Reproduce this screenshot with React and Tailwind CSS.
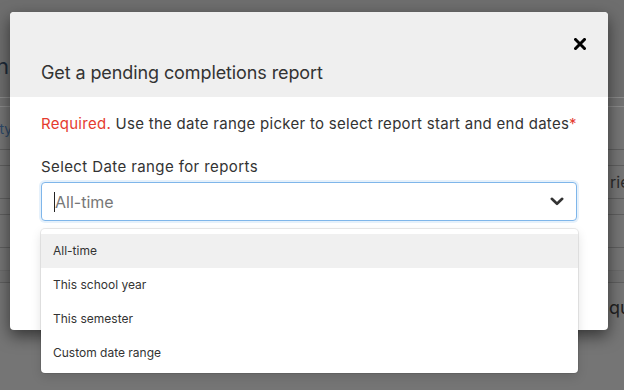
import React from "react";

const font = { fontFamily: "Inter, 'Noto Sans', sans-serif" };

function Background() {
  return (
    <div className="flex h-full w-full flex-col bg-[#757575]" style={font}>
      <div className="flex h-[97px] items-end bg-[#6e6e6e] pb-[20px]">
        <span className="-ml-[4px] text-[22px] leading-none text-[#1d2a38]">n</span>
      </div>
      <div className="h-[10px] border-y border-[#8a8a8a] bg-[#727272]" />
      <div className="flex h-[43px] items-center border-b border-[#5f5f5f]">
        <span className="-ml-[4px] text-[14px] text-[#2f4a6a]">ity</span>
      </div>
      <div className="h-[16px] border-b border-[#5f5f5f]" />
      <div className="flex h-[33px] items-center border-b border-[#5f5f5f] pl-[610px]">
        <span className="whitespace-nowrap text-[16px] text-[#2a2a2a]">ries</span>
      </div>
      <div className="h-[16px] border-b border-[#5f5f5f]" />
      <div className="h-[33px] border-b border-[#5f5f5f]" />
      <div className="h-[23px] border-b border-[#6a6a6a]" />
      <div className="h-[12px] border-b border-[#5f5f5f] bg-[#717171]" />
      <div className="flex h-[50px] items-start pl-[609px] pt-[16px]">
        <span className="whitespace-nowrap text-[18px] leading-none text-[#222]">quick</span>
      </div>
    </div>
  );
}

export default function App() {
  const items = ["All-time", "This school year", "This semester", "Custom date range"];
  return (
    <div className="relative h-[390px] w-[624px] overflow-hidden" style={font}>
      <Background />
      <div className="absolute left-[10px] top-[12px] h-[318px] w-[598px] rounded-[4px] bg-white shadow-[0_6px_16px_rgba(0,0,0,0.55)]">
        <div className="relative h-[85px] rounded-t-[4px] bg-[#efefef] px-[31px] pt-[49px]">
          <h2 className="text-[18px] leading-[24px] tracking-[-0.1px] text-[#333]">
            Get a pending completions report
          </h2>
          <button className="absolute right-[21px] top-[25px] flex h-[14px] w-[14px] items-center justify-center">
            <svg width="12" height="12" viewBox="0 0 12 12">
              <path d="M1.5 1.5 L10.5 10.5 M10.5 1.5 L1.5 10.5" stroke="#000" strokeWidth="3" strokeLinecap="square" />
            </svg>
          </button>
        </div>
        <div className="px-[31px] pt-[16px]">
          <p className="whitespace-nowrap text-[15px] leading-[22px] tracking-[0.28px] text-[#333]">
            <span className="text-[#e53b2f]">Required.</span> Use the date range picker to select report start and end dates
            <span className="text-[#e53b2f]">*</span>
          </p>
          <p className="mt-[21px] text-[15px] leading-[22px] tracking-[0.4px] text-[#333]">
            Select Date range for reports
          </p>
          <div className="mt-[4px] flex h-[39px] w-[536px] items-center rounded-[4px] border border-[#7fb6ea] bg-white pl-[12px] pr-[12px] shadow-[0_0_0_2px_rgba(90,160,230,0.15)]">
            <span className="h-[20px] w-px bg-[#222]" />
            <span className="text-[16px] text-[#777]">All-time</span>
            <span className="ml-auto flex items-center">
              <svg width="14" height="9" viewBox="0 0 14 9">
                <path d="M1.8 1.8 L7 6.8 L12.2 1.8" fill="none" stroke="#333" strokeWidth="2.6" strokeLinecap="round" strokeLinejoin="round" />
              </svg>
            </span>
          </div>
        </div>
      </div>
      <div className="absolute left-[41px] top-[229px] w-[537px] rounded-[4px] bg-white pb-[3px] pt-[5px] shadow-[0_0_0_1px_rgba(0,0,0,0.08),0_4px_11px_rgba(0,0,0,0.12)]">
        {items.map((it, i) => (
          <div
            key={it}
            className={
              i === 0
                ? "flex h-[34px] items-center bg-[#f0f0f0] px-[12px] text-[12px] text-[#333]"
                : "flex h-[34px] items-center px-[12px] text-[12px] text-[#333]"
            }
          >
            {it}
          </div>
        ))}
      </div>
    </div>
  );
}
